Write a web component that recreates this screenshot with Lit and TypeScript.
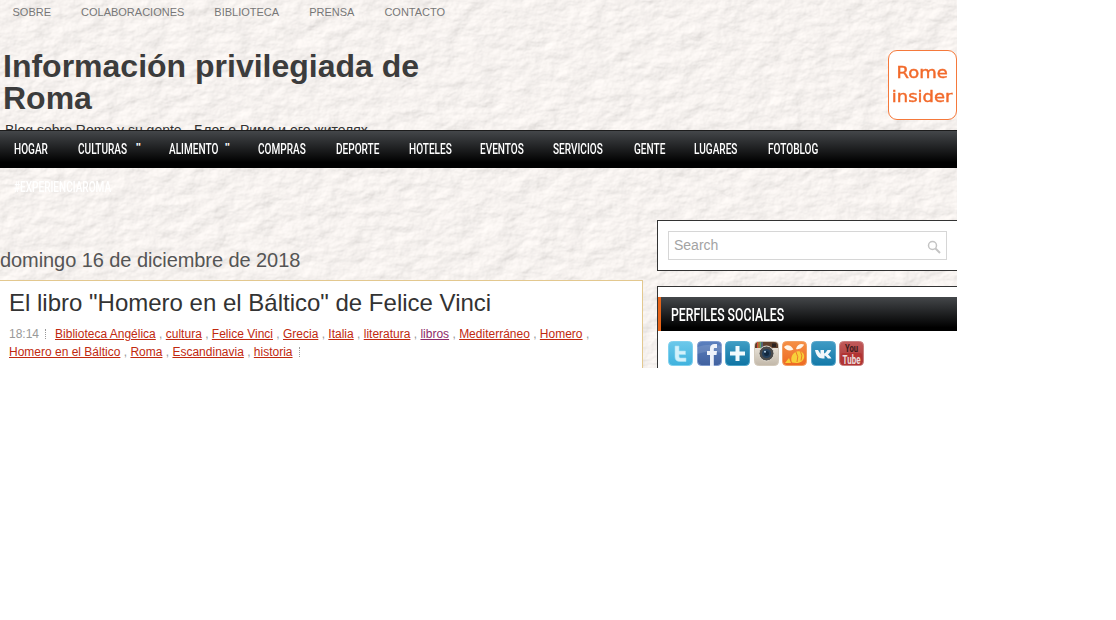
import { LitElement, html, css, svg } from "lit";
import { customElement } from "lit/decorators.js";

const topLinks = ["Sobre", "Colaboraciones", "Biblioteca", "Prensa", "Contacto"];
const navItems = [
  { t: "Hogar", w: 34 }, { t: "Culturas", w: 50, m: true }, { t: "Alimento", w: 48, m: true }, { t: "Compras", w: 48 },
  { t: "Deporte", w: 43 }, { t: "Hoteles", w: 41 }, { t: "Eventos", w: 43 }, { t: "Servicios", w: 51 }, { t: "Gente", w: 30 },
  { t: "Lugares", w: 44 }, { t: "Fotoblog", w: 50 }, { t: "#ExperienciaRoma", w: 96, ghost: true },
];
const row1 = ["Biblioteca Angélica", "cultura", "Felice Vinci", "Grecia", "Italia", "literatura", "libros", "Mediterráneo", "Homero"];
const row2 = ["Homero en el Báltico", "Roma", "Escandinavia", "historia"];

const grad = (id: string, a: string, b: string) => svg`<linearGradient id=${id} x1="0" y1="0" x2="0" y2="1"><stop offset="0" stop-color=${a}/><stop offset="1" stop-color=${b}/></linearGradient>`;

const icons = [
  svg`<rect x=".5" y=".5" width="24" height="24" rx="4" fill="url(#g-tw)" stroke="#7fd0ee"/>
      <path d="M7 5v11c0 3 2 4.500 5 4.500h6v-3.500h-5c-1.500 0-2-.5-2-2v-1.500h6.500v-3.500H11V5z" fill="#d4f1fb" stroke="#a5e0f3" stroke-width=".6"/>`,
  svg`<rect x=".5" y=".5" width="24" height="24" rx="4" fill="url(#g-fb)" stroke="#7e9bcf"/>
      <path d="M0 13 Q12 9 25 12V5Q12 2 0 6z" fill="#fff" opacity=".12"/>
      <path d="M13 25V14h-3v-4h3V7.500C13 4.500 14.800 3 17.500 3H20v4h-2c-.9 0-1.200.4-1.200 1.200V10H20l-.5 4h-2.700v11z" fill="#eef2fa"/>`,
  svg`<rect x=".5" y=".5" width="24" height="24" rx="4" fill="url(#g-pl)" stroke="#4fa5c9"/>
      <path d="M10.500 5h4v5.500H20v4h-5.500V20h-4v-5.500H5v-4h5.500z" fill="#f2fafd"/>`,
  svg`<rect x=".5" y=".5" width="24" height="24" rx="4" fill="url(#g-ig)" stroke="#d2c9bb"/>
      <path d="M1 7V4.500Q1 1 4.500 1h16Q24 1 24 4.500V7z" fill="#5f402c"/>
      <path d="M3 1h1v6H3z" fill="#d8493c"/><path d="M4.500 1h1v6h-1z" fill="#e3b23c"/><path d="M6 1h1v6H6z" fill="#5aa469"/><path d="M7.500 1h1v6h-1z" fill="#4a86c5"/>
      <rect x="18" y="2.500" width="4" height="3.500" fill="#2b2320"/>
      <circle cx="12.500" cy="12.500" r="7.500" fill="#4a4a4a" stroke="#ded8cd" stroke-width="1"/>
      <circle cx="12.500" cy="12.500" r="4.500" fill="#233f5c"/><circle cx="12.500" cy="12.500" r="2.500" fill="#12283f"/><circle cx="11" cy="10.800" r="1" fill="#b6d2ea"/>`,
  svg`<rect x=".5" y=".5" width="24" height="24" rx="4" fill="url(#g-sw)" stroke="#f2a063"/>
      <path d="M2 6c3-3 7-2 9.500 2.500-4 2-7.500 1-9.500-2.500zM22 3.500c-3-1.500-7 0-8 4.500 3 1 7-1.500 8-4.500z" fill="#fff6ea"/>
      <path d="M10 21.500c-2-4 0-9.500 5-11 5-1 8 2.500 7 6.500-.8 3-4 5-8 5z" fill="#f8cf3a"/>
      <path d="M14 11q3 4.500 1 10M18.500 10.500q2.500 4 .5 9" stroke="#ee7a28" stroke-width="1" fill="none"/>
      <path d="M3 22l4-5 2 5z" fill="#f8cf3a"/>`,
  svg`<rect x=".5" y=".5" width="24" height="24" rx="4" fill="url(#g-vk)" stroke="#5aa7cb"/>
      <path d="M4 9h3l2.500 4V9H13v3.500C14.500 12 15.500 10.500 16.500 9H20c-.5 2-1.800 3.300-3 4.500 1.200.9 2.600 2.300 3.500 4h-3.700c-.8-1.400-1.900-2.500-3.300-3v3h-2C7.500 17.500 5 14 4 9z" fill="#f2f8fb"/>`,
  svg`<rect x=".5" y=".5" width="24" height="24" rx="4" fill="url(#g-yt)" stroke="#c98080"/>
      <rect x="2" y="12" width="21" height="12" rx="2" fill="#b23434"/>
      <text x="6" y="10.500" textLength="13" lengthAdjust="spacingAndGlyphs" class="yt a">You</text>
      <text x="3.500" y="22.500" textLength="18" lengthAdjust="spacingAndGlyphs" class="yt b">Tube</text>`,
];

@customElement("app-root")
export class AppRoot extends LitElement {
  static styles = css`
    :host { display: block; width: 1116px; height: 620px; background: #fff; overflow: hidden; font-family: "Liberation Sans", Arial, sans-serif; }
    .page { position: relative; width: 957px; height: 368px; overflow: hidden; background: #f6f1ee; }
    .tex { position: absolute; inset: 0; width: 957px; height: 368px; }
    .layer { position: relative; }

    .top { display: flex; gap: 30px; height: 24px; padding-left: 12.500px; align-items: center; }
    .top a { font-size: 11px; color: #777; text-transform: uppercase; }

    .head { display: flex; justify-content: space-between; height: 106px; overflow: hidden; }
    .brand { width: 470px; padding: 26px 0 0 3px; box-sizing: border-box; }
    h1 { margin: 0; font-size: 32px; line-height: 32px; font-weight: 700; color: #3c3c3c; width: 430px; }
    .sub { font-size: 14px; line-height: 16px; color: #333; margin: 8px 0 0 2px; white-space: nowrap; }
    .logo { box-sizing: border-box; width: 69px; height: 70px; margin-top: 26px; background: #fff; border: 1.500px solid #f5793b; border-radius: 9px;
      display: flex; flex-direction: column; align-items: center; justify-content: center; color: #f26a2b; font-family: "DejaVu Sans", sans-serif; font-size: 15.500px; line-height: 24px; }
    .logo span { display: block; transform: scaleX(1.16); -webkit-text-stroke: .4px #f26a2b; }

    .nav { height: 38px; display: flex; flex-wrap: wrap; align-content: flex-start; padding: 0 60px 0 14px; column-gap: 30px; box-sizing: border-box;
      background: linear-gradient(#44474a, #000 85%); border-top: 1px solid #1c1c1c; font-family: Roboto, "Liberation Sans", sans-serif; }
    .nav a { position: relative; flex: none; height: 37px; line-height: 37px; font-size: 15px; font-weight: 500; color: #fff; text-transform: uppercase; white-space: nowrap; }
    .nav a b { display: inline-block; font-weight: 500; transform: scaleX(.67); transform-origin: 0 50%; }
    .nav a.more { margin-right: 11px; }
    .nav a.more::after { content: '"'; position: absolute; right: -13px; top: -2px; font: 700 11px/37px "Liberation Sans", sans-serif; }
    .nav a.ghost { color: #fff; margin-top: 1px; }

    .cols { display: flex; margin-top: 52px; align-items: flex-start; }
    .main { width: 643px; flex: none; padding-top: 28px; }
    .date { font-size: 20px; line-height: 24px; color: #555; margin: 0 0 8px; white-space: nowrap; letter-spacing: -.07px; }
    .post { box-sizing: border-box; width: 643px; height: 120px; background: #fff; border-top: 1px solid #e3c88f; border-right: 1px solid #e3c88f; padding: 6px 0 0 9px; }
    h2 { margin: 0 0 6px; font-size: 24px; line-height: 32px; font-weight: 400; color: #333; }
    .meta { font-size: 12px; line-height: 18px; color: #999; }
    .meta a { color: #c1290f; text-decoration: underline; }
    .meta a.vis { color: #8e2a6a; }
    .sep { display: inline-block; height: 10px; border-left: 1px dotted #999; margin: 0 9px 0 6px; vertical-align: -1px; }

    .side { width: 300px; margin-left: 14px; flex: none; }
    .box { width: 320px; background: #fff; border: 1px solid #333; box-sizing: border-box; }
    .search { height: 51px; padding: 10px; margin-bottom: 15px; }
    .field { box-sizing: border-box; width: 279px; height: 29px; border: 1px solid #d6d6d6; display: flex; align-items: center; justify-content: space-between; padding: 0 5px; font-size: 14px; color: #a3a3a3; }
    .field span { margin-top: -2px; }
    .field svg { display: block; margin-top: 2px; }
    .social { height: 120px; padding-top: 10px; }
    .wtitle { height: 34px; line-height: 35px; border-left: 3px solid #e8651a; padding-left: 10px; background: linear-gradient(#44474a, #000 90%); color: #fff; font-family: Roboto, "Liberation Sans", sans-serif; font-weight: 500; font-size: 18px; text-transform: uppercase; white-space: nowrap; }
    .wtitle b { display: inline-block; font-weight: 500; transform: scaleX(.68); transform-origin: 0 50%; }
    .icons { display: flex; gap: 3.500px; padding: 10px 0 0 10px; }
    .icons svg { display: block; flex: none; }
    .yt { font-family: Roboto, "Liberation Sans", sans-serif; font-weight: 700; }
    .yt.a { font-size: 10px; fill: #3a1a1a; }
    .yt.b { font-size: 12px; fill: #eadcdc; }
  `;

  private links(list: string[]) {
    return list.map((l, i) => html`${i ? " , " : ""}<a class=${l === "libros" ? "vis" : ""}>${l}</a>`);
  }

  render() {
    return html`
      <div class="page">
        <svg class="tex" viewBox="0 0 957 368" aria-hidden="true">
          <filter id="stucco" x="0" y="0" width="100%" height="100%">
            <feTurbulence type="fractalNoise" baseFrequency="0.045 0.07" numOctaves="7" seed="4"/>
            <feDiffuseLighting surfaceScale="1.500" diffuseConstant="1.120" lighting-color="#f7f3f0">
              <feDistantLight azimuth="45" elevation="62"/>
            </feDiffuseLighting>
          </filter>
          <rect width="957" height="368" filter="url(#stucco)"/>
        </svg>
        <div class="layer">
          <div class="top">${topLinks.map((t) => html`<a>${t}</a>`)}</div>
          <div class="head">
            <div class="brand">
              <h1>Información privilegiada de Roma</h1>
              <div class="sub">Blog sobre Roma y su gente - Блог о Риме и его жителях</div>
            </div>
            <div class="logo"><span>Rome</span><span>insider</span></div>
          </div>
          <nav class="nav">
            ${navItems.map((n) => html`<a class=${n.m ? "more" : n.ghost ? "ghost" : ""} style="width:${n.w}px"><b>${n.t}</b></a>`)}
          </nav>
          <div class="cols">
            <div class="main">
              <div class="date">domingo 16 de diciembre de 2018</div>
              <article class="post">
                <h2>El libro "Homero en el Báltico" de Felice Vinci</h2>
                <div class="meta">18:14<span class="sep"></span>${this.links(row1)} ,<br>${this.links(row2)}<span class="sep"></span></div>
              </article>
            </div>
            <aside class="side">
              <div class="box search">
                <div class="field">
                  <span>Search</span>
                  <svg width="14" height="14" viewBox="0 0 14 14"><circle cx="5.500" cy="5.500" r="4" fill="none" stroke="#c4c4c4" stroke-width="1.500"/><path d="M8.500 8.500L13 13" stroke="#c4c4c4" stroke-width="2"/></svg>
                </div>
              </div>
              <div class="box social">
                <div class="wtitle"><b>Perfiles sociales</b></div>
                <div class="icons">
                  <svg width="0" height="0" style="position:absolute">
                    <defs>
                      ${grad("g-tw", "#6cc8ea", "#3fb2de")}
                      ${grad("g-fb", "#5b80bf", "#41619f")}
                      ${grad("g-pl", "#3f9dc4", "#0f74a3")}
                      ${grad("g-ig", "#f3eee5", "#c2b8a9")}
                      ${grad("g-sw", "#f58f45", "#ee6a22")}
                      ${grad("g-vk", "#3f9bc4", "#1479a8")}
                      ${grad("g-yt", "#c25a5a", "#a83232")}
                    </defs>
                  </svg>
                  ${icons.map((i) => html`<svg width="25" height="25" viewBox="0 0 25 25">${i}</svg>`)}
                </div>
              </div>
            </aside>
          </div>
        </div>
      </div>
    `;
  }
}
